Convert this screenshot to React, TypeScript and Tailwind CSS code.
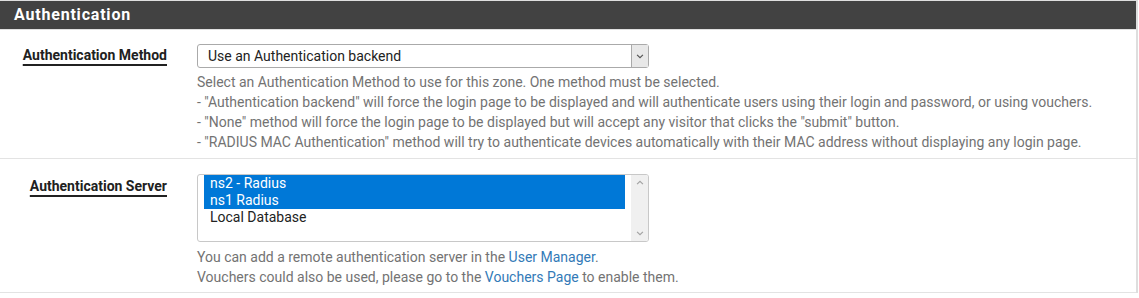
import React from "react";

function Chevron({ up = false, className = "" }: { up?: boolean; className?: string }) {
  return (
    <svg width="9" height="6" viewBox="0 0 9 6" className={className}>
      <path
        d={up ? "M1 5 L4.5 1.5 L8 5" : "M1 1 L4.5 4.5 L8 1"}
        fill="none"
        stroke="currentColor"
        strokeWidth="1.4"
      />
    </svg>
  );
}

export default function App() {
  return (
    <div
      className="w-[1139px] h-[298px] bg-white overflow-hidden"
      style={{ fontFamily: "Roboto, 'Liberation Sans', sans-serif" }}
    >
      <div className="w-[1138px] border-t border-r-2 border-[#dedede]">
        <div className="h-[29px] bg-[#424242] flex items-center pl-[14px] border-b border-[#e0e0e0]">
          <span className="text-white font-bold text-[16px] tracking-[0.8px]">Authentication</span>
        </div>

        {/* Row 1 */}
        <div className="flex border-b border-[#e3e3e3] pt-[14px] pb-[6px]">
          <div className="w-[167px] shrink-0 text-right -mt-[1px]">
            <span className="text-[14px] font-bold text-[#212121] underline underline-offset-[4px] decoration-[1.5px] leading-[20px]">
              Authentication Method
            </span>
          </div>
          <div className="ml-[30px] flex flex-col">
            <div className="w-[452px] h-[24px] border border-[#aaaaaa] rounded-[3px] flex items-center justify-between bg-white">
              <span className="pl-[10px] text-[14px] text-[#222]">Use an Authentication backend</span>
              <div className="w-[17px] h-[22px] bg-[#e8e8e8] border-l border-[#aaaaaa] flex items-center justify-center text-[#555]">
                <Chevron className="w-[8px] h-[5px]" />
              </div>
            </div>
            <div className="mt-[4px] text-[14px] leading-[20px] text-[#737373]">
              <div>Select an Authentication Method to use for this zone. One method must be selected.</div>
              <div>- "Authentication backend" will force the login page to be displayed and will authenticate users using their login and password, or using vouchers.</div>
              <div>- "None" method will force the login page to be displayed but will accept any visitor that clicks the "submit" button.</div>
              <div>- "RADIUS MAC Authentication" method will try to authenticate devices automatically with their MAC address without displaying any login page.</div>
            </div>
          </div>
        </div>

        {/* Row 2 */}
        <div className="flex border-b border-[#e3e3e3] pt-[15px] pb-[5px]">
          <div className="w-[167px] shrink-0 text-right">
            <span className="text-[14px] font-bold text-[#212121] underline underline-offset-[4px] decoration-[1.5px] leading-[20px]">
              Authentication Server
            </span>
          </div>
          <div className="ml-[30px] flex flex-col">
            <div className="w-[452px] h-[68px] border border-[#c8c8c8] rounded-[3px] flex bg-white overflow-hidden">
              <div className="flex-1 pl-[6px] pr-[6px] text-[14px] leading-[17px]">
                <div className="bg-[#0078d7] text-white pl-[6px]">ns2 - Radius</div>
                <div className="bg-[#0078d7] text-white pl-[6px]">ns1 Radius</div>
                <div className="text-[#222] pl-[6px]">Local Database</div>
              </div>
              <div className="w-[17px] bg-[#f0f0f0] flex flex-col items-center justify-between py-[5px] text-[#a3a3a3]">
                <Chevron up className="w-[8px] h-[5px]" />
                <Chevron className="w-[8px] h-[5px]" />
              </div>
            </div>
            <div className="mt-[5px] text-[14px] leading-[20px] text-[#737373]">
              <div>
                You can add a remote authentication server in the{" "}
                <span className="text-[#337ab7]">User Manager</span>.
              </div>
              <div>
                Vouchers could also be used, please go to the{" "}
                <span className="text-[#337ab7]">Vouchers Page</span> to enable them.
              </div>
            </div>
          </div>
        </div>
      </div>
    </div>
  );
}
